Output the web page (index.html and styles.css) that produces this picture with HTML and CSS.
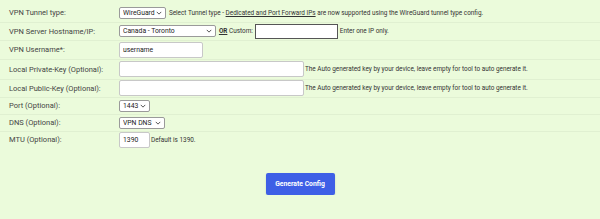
FILE: index.html
```html
<!DOCTYPE html>
<html lang="en">
<head>
    <meta charset="UTF-8">
    <title>WireGuard Config Generator</title>
    <link rel="stylesheet" href="styles.css">
</head>
<body>
    <form class="config-form">
        <table class="config-table">
            <tr class="row-tunnel">
                <td class="label">VPN Tunnel type:</td>
                <td>
                    <span class="sel-wrap"><select class="sel sel-tunnel"><option>WireGuard</option></select><svg class="chev" viewBox="0 0 8 5"><path d="M1 1l3 3 3-3"/></svg></span>
                    <span class="hint">Select Tunnel type - <u>Dedicated and Port Forward IPs</u> are now supported using the WireGuard tunnel type config.</span>
                </td>
            </tr>
            <tr class="row-server">
                <td class="label">VPN Server Hostname/IP:</td>
                <td>
                    <span class="sel-wrap"><select class="sel sel-server"><option>Canada - Toronto</option></select><svg class="chev" viewBox="0 0 8 5"><path d="M1 1l3 3 3-3"/></svg></span>
                    <span class="hint"><b><u>OR</u></b> Custom:</span><input class="inp inp-custom" type="text"><span class="hint hint-after">Enter one IP only.</span>
                </td>
            </tr>
            <tr class="row-user">
                <td class="label">VPN Username*:</td>
                <td><input class="inp inp-user" type="text" value="username"></td>
            </tr>
            <tr class="row-priv">
                <td class="label">Local Private-Key (Optional):</td>
                <td><input class="inp inp-key" type="text"><span class="hint">The Auto generated key by your device, leave empty for tool to auto generate it.</span></td>
            </tr>
            <tr class="row-pub">
                <td class="label">Local Public-Key (Optional):</td>
                <td><input class="inp inp-key" type="text"><span class="hint">The Auto generated key by your device, leave empty for tool to auto generate it.</span></td>
            </tr>
            <tr class="row-port">
                <td class="label">Port (Optional):</td>
                <td><span class="sel-wrap"><select class="sel sel-port"><option>1443</option></select><svg class="chev" viewBox="0 0 8 5"><path d="M1 1l3 3 3-3"/></svg></span></td>
            </tr>
            <tr class="row-dns">
                <td class="label">DNS (Optional):</td>
                <td><span class="sel-wrap"><select class="sel sel-dns"><option>VPN DNS</option></select><svg class="chev" viewBox="0 0 8 5"><path d="M1 1l3 3 3-3"/></svg></span></td>
            </tr>
            <tr class="row-mtu">
                <td class="label">MTU (Optional):</td>
                <td><input class="inp inp-mtu" type="text" value="1390"><span class="hint">Default is 1390.</span></td>
            </tr>
        </table>
        <div class="actions">
            <button type="button" class="btn-generate">Generate Config</button>
        </div>
    </form>
</body>
</html>
```

FILE: styles.css
```css
* {
    box-sizing: border-box;
}

body {
    margin: 0;
    padding: 4px 0 0;
    background-color: #ebfbdb;
    font-family: Roboto, 'Liberation Sans', sans-serif;
    color: #333;
    font-size: 7.5px;
}

.config-table {
    width: 100%;
    border-collapse: collapse;
}

.config-table td {
    border-top: 1px solid #e0f0d1;
    padding: 0;
    vertical-align: middle;
    white-space: nowrap;
}

.config-table tr:first-child td {
    border-top: none;
}

.row-tunnel td { height: 18px; }
.row-server td { height: 18px; }
.row-user td { height: 19px; }
.row-priv td { height: 20px; }
.row-pub td { height: 18px; }
.row-port td { height: 17px; }
.row-dns td { height: 17px; }
.row-mtu td { height: 17px; }

.config-table td.label {
    width: 119px;
    padding-left: 9px;
    color: #444;
}

.hint {
    font-size: 6.4px;
    color: #333;
    margin-left: 1px;
}

.hint-after {
    margin-left: 2px;
}

.hint u {
    text-underline-offset: 1px;
}

.sel-wrap {
    position: relative;
    display: inline-block;
    vertical-align: middle;
}

.sel {
    appearance: none;
    -webkit-appearance: none;
    display: block;
    font-family: Roboto, 'Liberation Sans', sans-serif;
    font-size: 6.8px;
    height: 12px;
    padding: 0 0 0 3px;
    border: 1px solid #9a9a9a;
    border-radius: 2px;
    background: #fff;
    color: #222;
}

.chev {
    position: absolute;
    right: 4px;
    top: 4px;
    width: 6px;
    height: 4px;
    fill: none;
    stroke: #333;
    stroke-width: 1.1;
    pointer-events: none;
}

.sel-tunnel { width: 47px; }
.sel-server { width: 97px; }
.sel-port { width: 31px; }
.sel-dns { width: 46px; }

.inp {
    font-family: Roboto, 'Liberation Sans', sans-serif;
    font-size: 6.8px;
    height: 16px;
    padding: 0 3px;
    border: 1px solid #c8c8c8;
    border-radius: 2px;
    background: #fff;
    color: #222;
    vertical-align: middle;
}

.inp-custom {
    width: 83px;
    height: 15px;
    margin-left: 2px;
    border: 1px solid #555;
    border-radius: 0;
}

.inp-user { width: 84px; }
.inp-key { width: 185px; }
.inp-mtu { width: 31px; }

.actions {
    text-align: center;
    padding-top: 25px;
}

.btn-generate {
    background-color: #3e5fe6;
    color: #fff;
    border: none;
    border-radius: 2px;
    font-family: Roboto, 'Liberation Sans', sans-serif;
    font-weight: 700;
    font-size: 6.8px;
    width: 69px;
    height: 22px;
    box-shadow: 0 1px 2px rgba(0, 0, 0, 0.15);
}
```
